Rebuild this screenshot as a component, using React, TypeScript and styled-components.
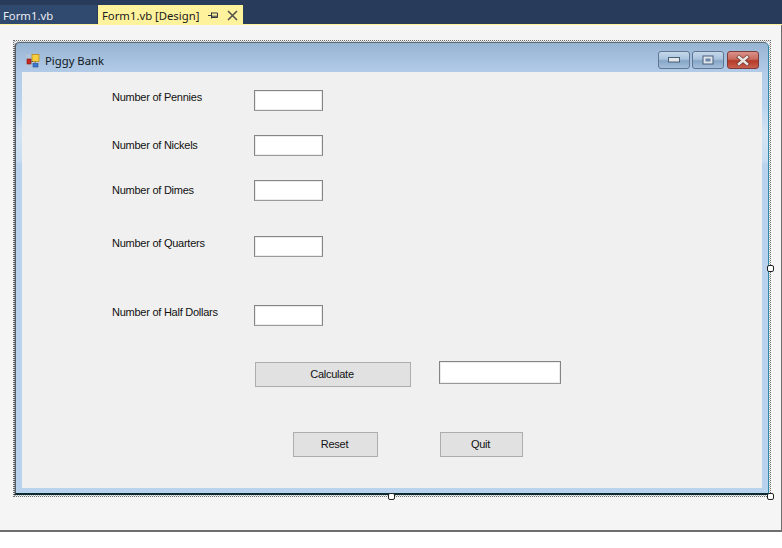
import React from "react";
import styled, { createGlobalStyle } from "styled-components";

const Global = createGlobalStyle`
  html, body { margin: 0; padding: 0; background: #fff; }
  #root { width: 782px; height: 548px; overflow: hidden; }
`;

const Page = styled.div`
  width: 782px;
  height: 548px;
  display: flex;
  flex-direction: column;
  background: #fff;
`;

const TabBar = styled.div`
  height: 24px;
  flex: none;
  display: flex;
  align-items: flex-end;
  gap: 1px;
  background: #293b5a;
  font-family: "Noto Sans", "Liberation Sans", sans-serif;
  font-size: 11.3px;
  border-bottom: 1px solid #fff29d;
`;

const Tab = styled.div<{ $active?: boolean }>`
  height: 19px;
  display: flex;
  align-items: center;
  box-sizing: border-box;
  padding-top: 1px;
  width: ${(p) => (p.$active ? "145px" : "97px")};
  padding-left: ${(p) => (p.$active ? "4px" : "3px")};
  background: ${(p) => (p.$active ? "#fff29d" : "#30496e")};
  color: ${(p) => (p.$active ? "#1a1a1a" : "#e8edf4")};
  white-space: nowrap;
`;

const TabIcons = styled.span`
  display: flex;
  align-items: center;
  gap: 8px;
  margin-left: 9px;
`;

const Surface = styled.div`
  width: 782px;
  height: 507px;
  flex: none;
  box-sizing: border-box;
  padding: 15px 0 0 13px;
  background: #f5f5f5;
  border-right: 1px solid #6e6e6e;
  border-bottom: 2px solid #6e6e6e;
`;

const SelectionFrame = styled.div`
  position: relative;
  width: 758px;
  height: 457px;
  box-sizing: border-box;
  padding: 1px 1px 1px 0;
  border: 1px dotted #6a6a6a;
  outline: 1px dotted #b5b5b5;
  outline-offset: -2px;
`;

const Handle = styled.div<{ $x: number; $y: number }>`
  position: absolute;
  left: ${(p) => p.$x}px;
  top: ${(p) => p.$y}px;
  width: 7px;
  height: 7px;
  box-sizing: border-box;
  background: #fff;
  border: 1px solid #222;
  border-radius: 2px;
`;

const FormWindow = styled.div`
  width: 755px;
  height: 453px;
  box-sizing: border-box;
  display: flex;
  flex-direction: column;
  border: 1px solid #4a5560;
  border-left: 2px solid #565c63;
  border-top-color: #5d6b78;
  border-right-color: #2b8aa8;
  border-bottom: 2px solid #0c2a34;
  border-radius: 5px 5px 0 0;
  background: linear-gradient(
    180deg,
    #97b4d3 0%,
    #b4cde9 7%,
    #b9d3ee 14%,
    #d4e4f3 20%,
    #c9def2 26%,
    #b9d3ee 27%,
    #b9d3ee 100%
  );
`;

const TitleBar = styled.div`
  height: 29px;
  flex: none;
  box-sizing: border-box;
  display: flex;
  align-items: center;
  padding: 6px 9px 0 10px;
  font-family: "Noto Sans", "Liberation Sans", sans-serif;
  font-size: 11.3px;
  color: #101820;
`;

const TitleText = styled.span`
  margin-left: 5px;
  flex: 1;
`;

const WindowButtons = styled.div`
  display: flex;
  gap: 2px;
  align-self: flex-start;
  margin-top: 2px;
`;

const WinButton = styled.div<{ $close?: boolean }>`
  width: 32px;
  height: 18px;
  margin-left: ${(p) => (p.$close ? "1px" : "0")};
  box-sizing: border-box;
  display: flex;
  align-items: center;
  justify-content: center;
  border: 1px solid ${(p) => (p.$close ? "#7d3a3a" : "#60758f")};
  border-radius: 3px;
  background: ${(p) =>
    p.$close
      ? "linear-gradient(180deg,#d9938a 0%,#c96a5c 45%,#b53a26 55%,#c9604e 100%)"
      : "linear-gradient(180deg,#c6d8ea 0%,#a9c3dd 45%,#86a5c6 55%,#a4bfdb 100%)"};
`;

const Client = styled.div`
  flex: 1;
  margin: 0 6px 5px 6px;
  padding: 18px 0 0 90px;
  background: #f0f0f0;
  font-family: "Liberation Sans", Arial, sans-serif;
  font-size: 11px;
  color: #111;
`;

const FieldRow = styled.div<{ $gap: number }>`
  display: flex;
  align-items: center;
  height: 21px;
  margin-top: ${(p) => p.$gap}px;
`;

const FieldLabel = styled.label<{ $raised?: boolean }>`
  width: 142px;
  flex: none;
  box-sizing: border-box;
  padding-bottom: ${(p) => (p.$raised ? "8px" : "2px")};
  letter-spacing: -0.25px;
  white-space: nowrap;
`;

const TextBox = styled.div<{ $wide?: boolean }>`
  width: ${(p) => (p.$wide ? "122px" : "69px")};
  height: ${(p) => (p.$wide ? "23px" : "21px")};
  flex: none;
  box-sizing: border-box;
  background: #fff;
  border: 1px solid #848484;
  border-bottom-color: #9a9a9a;
  box-shadow: inset 0 0 0 1px #ececec;
`;

const ActionRow = styled.div<{ $gap: number; $left: number; $between: number }>`
  display: flex;
  align-items: flex-start;
  margin-top: ${(p) => p.$gap}px;
  margin-left: ${(p) => p.$left}px;
  column-gap: ${(p) => p.$between}px;
`;

const FormButton = styled.div<{ $w: number; $nudge?: number }>`
  width: ${(p) => p.$w}px;
  height: 25px;
  flex: none;
  margin-top: ${(p) => p.$nudge ?? 0}px;
  padding: 0 2px 2px 0;
  box-sizing: border-box;
  display: flex;
  align-items: center;
  justify-content: center;
  background: #e1e1e1;
  border: 1px solid #adadad;
  letter-spacing: -0.25px;
`;

const FormIcon = () => (
  <svg width="14" height="14" viewBox="0 0 14 14">
    <rect x="0" y="0" width="14" height="14" fill="#b9c6d6" opacity="0.55" />
    <rect x="6" y="0.5" width="7" height="7" fill="#f7cf3e" stroke="#b98a1c" strokeWidth="0.8" />
    <rect x="1" y="5" width="4" height="5" fill="#c8281e" stroke="#7e1a14" strokeWidth="0.6" />
    <rect x="7" y="9.5" width="5" height="3.5" fill="#3a78d0" stroke="#204f94" strokeWidth="0.6" />
    <path d="M5 7.5h2M9 7.5v2" stroke="#555" strokeWidth="0.8" />
  </svg>
);

const PinIcon = () => (
  <svg width="11" height="9" viewBox="0 0 11 9" fill="none" stroke="#33373f" strokeWidth="1">
    <path d="M0 4.5h3.5M3.5 1.5v6M3.5 2h6v4.5h-6M4 5.2h5.5" />
  </svg>
);

const CloseIcon = () => (
  <svg width="11" height="11" viewBox="0 0 11 11" fill="none" stroke="#55524a" strokeWidth="1.6">
    <path d="M1 1l9 9M10 1l-9 9" />
  </svg>
);

const MinGlyph = () => (
  <svg width="12" height="6" viewBox="0 0 12 6">
    <rect x="0.5" y="0.5" width="11" height="4.5" fill="#e4e7ea" stroke="#4a5f78" />
  </svg>
);

const MaxGlyph = () => (
  <svg width="12" height="10" viewBox="0 0 12 10">
    <rect x="1" y="1" width="10" height="8" fill="#dfe5ec" stroke="#4a5f78" />
    <rect x="3.5" y="3.5" width="5" height="3" fill="#6d87a6" />
  </svg>
);

const CloseGlyph = () => (
  <svg width="16" height="11" viewBox="0 0 16 11">
    <path d="M2.5 1l11 9M13.5 1l-11 9" stroke="#5c2a24" strokeWidth="3.8" />
    <path d="M3 1.2l10 8.6M13 1.2l-10 8.6" stroke="#e9e6e2" strokeWidth="2.6" />
  </svg>
);

const fields: { label: string; gap: number; raised?: boolean }[] = [
  { label: "Number of Pennies", gap: 0, raised: true },
  { label: "Number of Nickels", gap: 24 },
  { label: "Number of Dimes", gap: 24 },
  { label: "Number of Quarters", gap: 35, raised: true },
  { label: "Number of Half Dollars", gap: 48, raised: true },
];

export default function App() {
  return (
    <Page>
      <Global />
      <TabBar>
        <Tab>Form1.vb</Tab>
        <Tab $active>
          Form1.vb [Design]
          <TabIcons>
            <PinIcon />
            <CloseIcon />
          </TabIcons>
        </Tab>
      </TabBar>
      <Surface>
        <SelectionFrame>
          <FormWindow>
            <TitleBar>
              <FormIcon />
              <TitleText>Piggy Bank</TitleText>
              <WindowButtons>
                <WinButton><MinGlyph /></WinButton>
                <WinButton><MaxGlyph /></WinButton>
                <WinButton $close><CloseGlyph /></WinButton>
              </WindowButtons>
            </TitleBar>
            <Client>
              {fields.map((f) => (
                <FieldRow key={f.label} $gap={f.gap}>
                  <FieldLabel $raised={f.raised}>{f.label}</FieldLabel>
                  <TextBox />
                </FieldRow>
              ))}
              <ActionRow $gap={35} $left={143} $between={28}>
                <FormButton $w={156} $nudge={1}>Calculate</FormButton>
                <TextBox $wide />
              </ActionRow>
              <ActionRow $gap={45} $left={181} $between={62}>
                <FormButton $w={85}>Reset</FormButton>
                <FormButton $w={83}>Quit</FormButton>
              </ActionRow>
            </Client>
          </FormWindow>
          <Handle $x={753} $y={224} />
          <Handle $x={374} $y={452} />
          <Handle $x={753} $y={452} />
        </SelectionFrame>
      </Surface>
    </Page>
  );
}
